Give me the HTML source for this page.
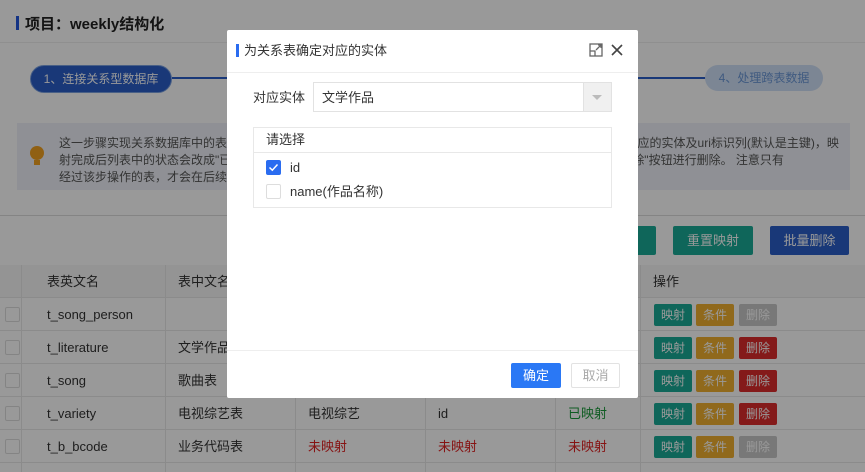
<!DOCTYPE html>
<html><head><meta charset="utf-8"><style>
*{box-sizing:border-box;margin:0;padding:0}
body{width:865px;height:472px;overflow:hidden;background:#fff;font-family:"Liberation Sans","Noto Sans CJK SC",sans-serif;font-size:13px;color:#333;position:relative}
.a{position:absolute}
.pill{border-radius:14px;text-align:center;line-height:26px;font-size:12px}
.btn{position:absolute;height:29px;line-height:29px;text-align:center;color:#fff;font-size:13px;border-radius:2px}
.row{position:absolute;left:0;width:865px;height:33px;border-bottom:1px solid #e8e8e8}
.cell{position:absolute;top:0;height:33px;line-height:33px;font-size:13px}
.sb{position:absolute;top:6px;height:22px;line-height:22px;width:38px;text-align:center;color:#fff;font-size:12px;border-radius:2px}
.cb{position:absolute;left:5px;top:9px;width:15px;height:15px;border:1px solid #ddd;border-radius:2px;background:#fff}
.t{line-height:16px}
</style></head><body>
<div class="a" style="left:0;top:0;width:865px;height:43px;border-bottom:1px solid #eee"></div>
<div class="a" style="left:16px;top:16px;width:3px;height:14px;background:#2255dd"></div>
<div class="a" style="left:25px;top:13px;font-size:15px;font-weight:bold;color:#222">项目：weekly结构化</div>
<div class="a" style="left:172px;top:77px;width:535px;height:2px;background:#2a5ec8"></div>
<div class="a pill" style="left:30px;top:65px;width:142px;background:#2a5ec8;color:#fff;border:1px solid #7aa0e0">1、连接关系型数据库</div>
<div class="a pill" style="left:705px;top:65px;width:118px;background:#cfe0f7;color:#6a96d6">4、处理跨表数据</div>
<div class="a" style="left:17px;top:123px;width:833px;height:67px;background:#eef1f8"></div>
<div class="a" style="left:30px;top:146px;width:14px;height:14px;border-radius:50%;background:#f0a020"></div>
<div class="a" style="left:34px;top:160px;width:6px;height:5px;background:#f0a020"></div>
<div class="a" style="left:59px;top:135px;font-size:12px;line-height:17px;color:#555;width:790px">这一步骤实现关系数据库中的表与schema中的实体进行映射，点击"映射"按钮，在弹出的对话框中选择与其对应的实体及uri标识列(默认是主键)，映<br>射完成后列表中的状态会改成"已映射"，点击"条件"按钮可以设置过滤条件，如果需要删除已经映射，点击"删除"按钮进行删除。 注意只有<br>经过该步操作的表，才会在后续步骤中进行处理。</div>
<div class="a" style="left:0;top:215px;width:865px;height:1px;background:#ddd"></div>
<div class="btn" style="left:620px;top:226px;width:36px;background:#1aaa96"></div>
<div class="btn" style="left:673px;top:226px;width:80px;background:#1aaa96">重置映射</div>
<div class="btn" style="left:770px;top:226px;width:79px;background:#2a5ec8">批量删除</div>
<div class="row" style="top:265px;height:33px;background:#f7f7f7"></div>
<div class="cell" style="left:47px;top:265px">表英文名</div><div class="cell" style="left:178px;top:265px">表中文名</div><div class="cell" style="left:653px;top:265px">操作</div>
<div class="row" style="top:298px"><div class="cb"></div><div class="cell" style="left:47px">t_song_person</div><div class="sb" style="left:654px;background:#1aaa96">映射</div><div class="sb" style="left:696px;background:#f0b030">条件</div><div class="sb" style="left:739px;background:#c8c8c8">删除</div></div>
<div class="row" style="top:331px"><div class="cb"></div><div class="cell" style="left:47px">t_literature</div><div class="cell" style="left:178px">文学作品</div><div class="sb" style="left:654px;background:#1aaa96">映射</div><div class="sb" style="left:696px;background:#f0b030">条件</div><div class="sb" style="left:739px;background:#dd2c2c">删除</div></div>
<div class="row" style="top:364px"><div class="cb"></div><div class="cell" style="left:47px">t_song</div><div class="cell" style="left:178px">歌曲表</div><div class="sb" style="left:654px;background:#1aaa96">映射</div><div class="sb" style="left:696px;background:#f0b030">条件</div><div class="sb" style="left:739px;background:#dd2c2c">删除</div></div>
<div class="row" style="top:397px"><div class="cb"></div><div class="cell" style="left:47px">t_variety</div><div class="cell" style="left:178px">电视综艺表</div><div class="cell" style="left:308px">电视综艺</div><div class="cell" style="left:438px">id</div><div class="cell" style="left:568px;color:#1a9a3a">已映射</div><div class="sb" style="left:654px;background:#1aaa96">映射</div><div class="sb" style="left:696px;background:#f0b030">条件</div><div class="sb" style="left:739px;background:#dd2c2c">删除</div></div>
<div class="row" style="top:430px"><div class="cb"></div><div class="cell" style="left:47px">t_b_bcode</div><div class="cell" style="left:178px">业务代码表</div><div class="cell" style="left:308px;color:#e02020">未映射</div><div class="cell" style="left:438px;color:#e02020">未映射</div><div class="cell" style="left:568px;color:#e02020">未映射</div><div class="sb" style="left:654px;background:#1aaa96">映射</div><div class="sb" style="left:696px;background:#f0b030">条件</div><div class="sb" style="left:739px;background:#c8c8c8">删除</div></div>
<div class="a" style="left:21px;top:265px;width:1px;height:207px;background:#e8e8e8"></div>
<div class="a" style="left:165px;top:265px;width:1px;height:207px;background:#e8e8e8"></div>
<div class="a" style="left:295px;top:265px;width:1px;height:207px;background:#e8e8e8"></div>
<div class="a" style="left:425px;top:265px;width:1px;height:207px;background:#e8e8e8"></div>
<div class="a" style="left:555px;top:265px;width:1px;height:207px;background:#e8e8e8"></div>
<div class="a" style="left:640px;top:265px;width:1px;height:207px;background:#e8e8e8"></div>
<div class="a" style="left:0;top:0;width:865px;height:472px;background:rgba(0,0,0,0.4)"></div>
<div class="a" style="left:227px;top:30px;width:411px;height:368px;background:#fff;border-radius:2px">
<div class="a" style="left:0;top:42px;width:411px;height:1px;background:#eee"></div>
<div class="a" style="left:9px;top:14px;width:3px;height:13px;background:#2a6cf0"></div>
<div class="a t" style="left:17px;top:13px;font-size:13px;color:#333">为关系表确定对应的实体</div>
<svg class="a" style="left:362px;top:13px" width="14" height="14" viewBox="0 0 14 14" fill="none" stroke="#666" stroke-width="1.3"><rect x="1" y="1" width="12" height="12"/><path d="M7 7L12 2M9 2h3v3M1 8h5v5"/></svg>
<svg class="a" style="left:384px;top:14px" width="12" height="12" viewBox="0 0 12 12" stroke="#444" stroke-width="1.6"><path d="M1 1L11 11M11 1L1 11"/></svg>
<div class="a t" style="left:26px;top:60px;font-size:13px">对应实体</div>
<div class="a" style="left:86px;top:52px;width:299px;height:30px;border:1px solid #e2e2e2;background:#fff"><div class="a t" style="left:8px;top:7px;font-size:13px">文学作品</div><div class="a" style="right:0;top:0;width:28px;height:28px;background:#f0f0f0;border-left:1px solid #e2e2e2"></div><div class="a" style="right:9px;top:12px;width:0;height:0;border-left:5px solid transparent;border-right:5px solid transparent;border-top:5px solid #bbb"></div></div>
<div class="a" style="left:26px;top:97px;width:359px;height:81px;border:1px solid #e8e8e8">
<div class="a" style="left:0;top:24px;width:357px;height:1px;background:#e8e8e8"></div>
<div class="a t" style="left:12px;top:4px;font-size:13px">请选择</div>
<div class="a" style="left:12px;top:32px;width:15px;height:15px;background:#2a6cf0;border-radius:2px"><svg width="15" height="15" viewBox="0 0 15 15"><path d="M3.5 7.5L6.3 10.2L11.5 4.5" fill="none" stroke="#fff" stroke-width="1.5"/></svg></div>
<div class="a t" style="left:36px;top:32px;font-size:13px">id</div>
<div class="a" style="left:12px;top:56px;width:15px;height:15px;border:1px solid #ddd;border-radius:2px"></div>
<div class="a t" style="left:36px;top:56px;font-size:13px">name(作品名称)</div>
</div>
<div class="a" style="left:0;top:320px;width:411px;height:1px;background:#eee"></div>
<div class="a" style="left:284px;top:333px;width:50px;height:25px;line-height:25px;text-align:center;background:#2a78f5;color:#fff;border-radius:2px">确定</div>
<div class="a" style="left:344px;top:333px;width:49px;height:25px;line-height:23px;text-align:center;border:1px solid #e2e2e2;color:#aaa;border-radius:2px">取消</div>
</div>
</body></html>
